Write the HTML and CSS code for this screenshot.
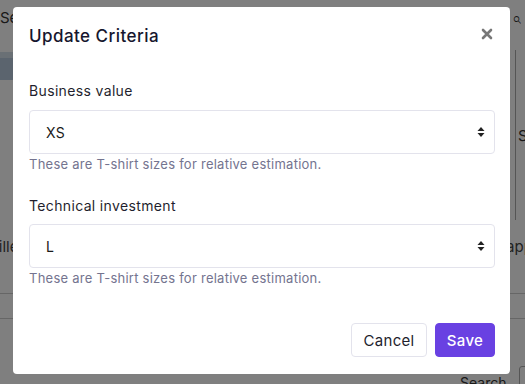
FILE: index.html
```html
<!DOCTYPE html>
<html>
<head>
<meta charset="utf-8">
<link rel="stylesheet" href="styles.css">
</head>
<body>
<div class="page">
  <div class="page-top">
    <span class="page-search">Search</span>
    <span class="page-glass">⌕</span>
  </div>
  <div class="page-hero">
    <div class="hero-art"></div>
    <div class="hero-card"><span class="hero-s">Sizes</span></div>
  </div>
  <div class="page-row">
    <span class="row-left">Filled</span>
    <span class="row-right">apply</span>
  </div>
  <div class="page-rule"></div>
  <div class="page-rule second"></div>
  <div class="page-bottom"><span class="bottom-search">Search</span><span class="bottom-box"></span></div>
</div>

<div class="backdrop">
  <div class="modal">
    <div class="modal-head">
      <h2 class="modal-title">Update Criteria</h2>
      <span class="modal-close">
        <svg width="12" height="12" viewBox="0 0 12 12"><path d="M2 2 L10 10 M10 2 L2 10" stroke="#777" stroke-width="2.6" stroke-linecap="round"/></svg>
      </span>
    </div>
    <div class="modal-body">
      <div class="field">
        <label class="field-label">Business value</label>
        <div class="select">
          <span class="select-value">XS</span>
          <svg class="select-arrows" width="8" height="12" viewBox="0 0 8 12"><path d="M0.5 5 L4 1 L7.5 5 Z M0.5 7 L4 11 L7.5 7 Z" fill="#222"/></svg>
        </div>
        <p class="field-help">These are T-shirt sizes for relative estimation.</p>
      </div>
      <div class="field">
        <label class="field-label">Technical investment</label>
        <div class="select">
          <span class="select-value">L</span>
          <svg class="select-arrows" width="8" height="12" viewBox="0 0 8 12"><path d="M0.5 5 L4 1 L7.5 5 Z M0.5 7 L4 11 L7.5 7 Z" fill="#222"/></svg>
        </div>
        <p class="field-help">These are T-shirt sizes for relative estimation.</p>
      </div>
    </div>
    <div class="modal-foot">
      <button class="btn btn-cancel">Cancel</button>
      <button class="btn btn-save">Save</button>
    </div>
  </div>
</div>
</body>
</html>
```
FILE: styles.css
```css
* { box-sizing: border-box; }
html, body { margin: 0; padding: 0; }
body {
  width: 525px;
  height: 384px;
  overflow: hidden;
  font-family: Inter, "Noto Sans", sans-serif;
  background: #fff;
  position: relative;
}

/* background page (seen through overlay) */
.page { width: 525px; height: 384px; color: #222; font-size: 14px; }
.page-top { display: flex; justify-content: space-between; padding: 8px 4px 0 0; height: 40px; }
.page-search { font-size: 15px; color: #333; }
.page-glass { font-size: 16px; color: #333; transform: scaleX(-1); }
.page-hero { display: flex; justify-content: space-between; height: 180px; }
.hero-art { width: 40px; height: 28px; margin-top: 12px; border-radius: 0 0 40px 0; background: #b6c8dc; border-top: 6px solid #d5e0ea; }
.hero-card { width: 10px; border-left: 1px solid #aaa; margin-top: 10px; display: flex; align-items: flex-start; padding-top: 76px; }
.hero-s { font-size: 15px; margin-left: 2px; color: #333; }
.page-row { display: flex; justify-content: space-between; height: 52px; align-items: center; }
.row-left { margin-left: -10px; font-size: 15px; color: #444; }
.row-right { margin-right: -20px; font-size: 15px; color: #444; }
.page-rule { height: 1px; background: #ccc; margin-top: 21px; }
.page-rule.second { margin-top: 24px; }
.page-bottom { display: flex; align-items: flex-start; padding: 56px 0 0 460px; gap: 13px; }
.bottom-search { font-size: 14px; color: #333; line-height: 16px; white-space: nowrap; }
.bottom-box { width: 20px; height: 24px; border: 1px solid #aaa; border-radius: 3px; margin-top: -9px; flex: none; }

/* overlay */
.backdrop {
  position: absolute;
  inset: 0;
  background: rgba(0, 0, 0, 0.5);
  padding: 7px 15px 10px 13px;
}
.modal {
  background: #fff;
  border-radius: 4px;
  height: 367px;
  display: flex;
  flex-direction: column;
  padding: 0 15px 0 16px;
}
.modal-head {
  display: flex;
  justify-content: space-between;
  align-items: center;
  height: 57px;
  padding-top: 1px;
}
.modal-title {
  margin: 0;
  font-size: 17px;
  font-weight: 500;
  color: #16162e;
  letter-spacing: 0.45px;
}
.modal-close { display: flex; margin-right: 2px; margin-top: -4px; }

.modal-body { padding-top: 17px; display: flex; flex-direction: column; gap: 23px; }
.field { display: flex; flex-direction: column; }
.field-label { font-size: 14px; color: #1f1f2e; height: 20px; line-height: 20px; margin-bottom: 9px; letter-spacing: 0.35px; }
.field + .field .field-label { margin-bottom: 8px; }
.select {
  height: 44px;
  border: 1px solid #e3e3ec;
  border-radius: 4px;
  display: flex;
  align-items: center;
  justify-content: space-between;
  padding: 0 9px 0 16px;
}
.select-value { font-size: 14px; color: #1a1a1a; letter-spacing: 0.3px; }
.field-help { margin: 1px 0 0; font-size: 13px; color: #74748f; line-height: 18px; letter-spacing: 0.25px; }

.modal-foot {
  margin-top: auto;
  display: flex;
  justify-content: flex-end;
  gap: 8px;
  padding-bottom: 17px;
}
.btn {
  height: 34px;
  border-radius: 4px;
  font-family: inherit;
  font-size: 15px;
  padding: 0;
  cursor: pointer;
  letter-spacing: 0.3px;
}
.btn-cancel { background: #fff; border: 1px solid #e3e3ec; color: #1f1f2e; width: 76px; }
.btn-save { background: #6941e2; border: 1px solid #6941e2; color: #fff; font-weight: 500; width: 60px; }
```
